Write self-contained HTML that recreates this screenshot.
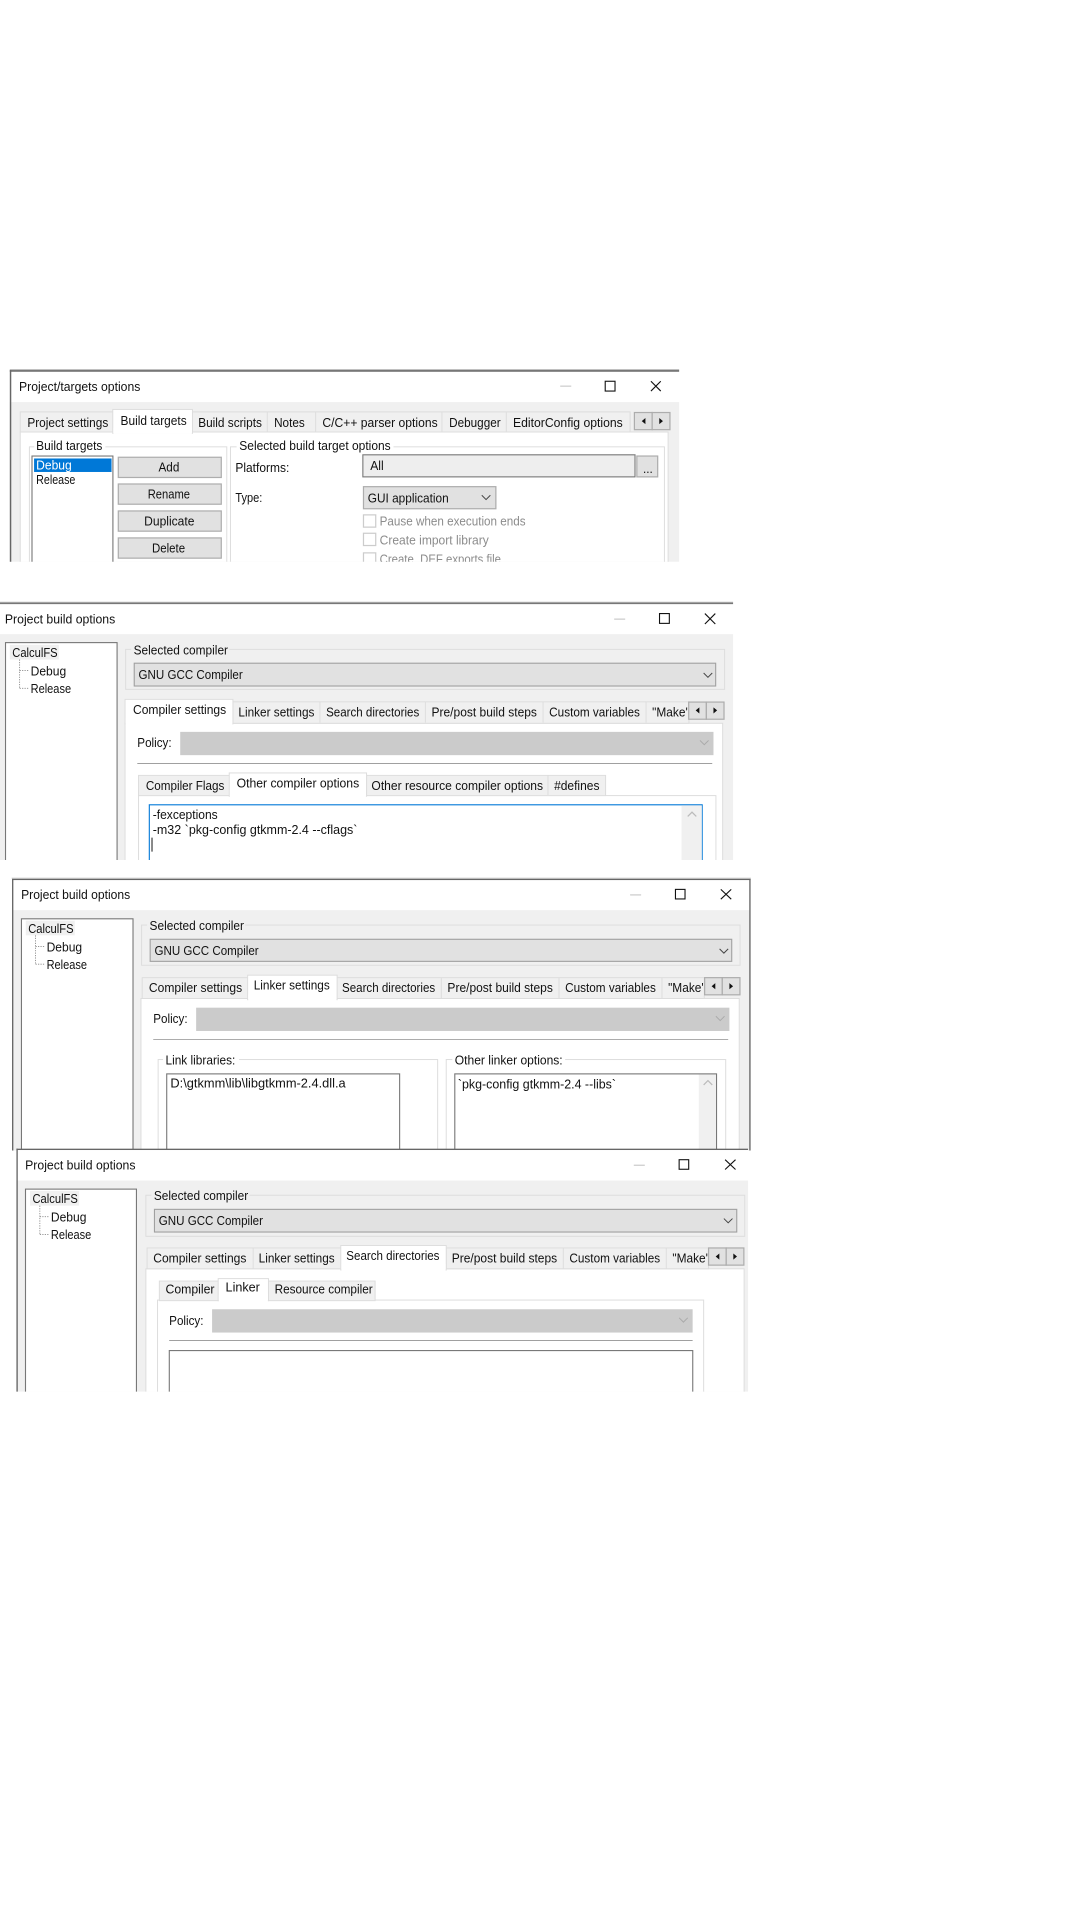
<!DOCTYPE html>
<html><head><meta charset="utf-8"><style>
html,body{margin:0;padding:0;background:#fff;width:1080px;height:1920px;overflow:hidden}
svg{display:block}
text{font-family:"Liberation Sans",sans-serif;font-size:10.4px;fill:#111}
.g{fill:#8c8c8c}
.w{fill:#fff}
</style></head><body>
<svg width="1080" height="1920" viewBox="0 0 881 1566.200" preserveAspectRatio="none" xmlns="http://www.w3.org/2000/svg">
<defs>
<clipPath id="c1"><rect x="0" y="290" width="886" height="168.200"/></clipPath>
<clipPath id="c2"><rect x="0" y="485" width="886" height="216.500"/></clipPath>
<clipPath id="c3"><rect x="0" y="710" width="886" height="228.500"/></clipPath>
<clipPath id="c4"><rect x="0" y="936" width="886" height="199.200"/></clipPath>
</defs>
<rect width="881" height="1567" fill="#fff"/>

<!-- WINDOW 1 -->
<g clip-path="url(#c1)"><g transform="translate(0,-1)">
<rect x="8" y="303" width="546" height="160" fill="#fff"/>
<rect x="8" y="329" width="546" height="140" fill="#f0f0f0"/>
<rect x="8" y="302" width="546" height="1" fill="#ccc"/>
<rect x="8" y="302.700" width="546" height="1.600" fill="#777"/>
<rect x="8" y="303" width="1.200" height="160" fill="#666"/>
<text x="15.500" y="320" textLength="99" lengthAdjust="spacingAndGlyphs">Project/targets options</text>
<path d="M457 316h9" stroke="#ccc" fill="none"/>
<rect x="493.700" y="312" width="8" height="8" fill="none" stroke="#111" stroke-width=".9"/>
<path d="M531 312l8 8M539 312l-8 8" stroke="#111" stroke-width=".9" fill="none"/>
<rect x="16.500" y="353.400" width="528.500" height="120" fill="#fff" stroke="#ddd" stroke-width=".8"/>
<rect x="16.500" y="337" width="497.500" height="16.400" fill="#f0f0f0" stroke="#ddd" stroke-width=".8"/>
<path d="M157 337v16M218 337v16M257.500 337v16M360.500 337v16M413 337v16" stroke="#ddd" stroke-width=".8"/>
<rect x="92" y="335" width="65" height="19.500" fill="#fff" stroke="#ddd" stroke-width=".8"/>
<rect x="92.500" y="350" width="64" height="5" fill="#fff"/>
<text x="22.300" y="349.500" textLength="66" lengthAdjust="spacingAndGlyphs">Project settings</text>
<text x="98.300" y="347.500" textLength="54" lengthAdjust="spacingAndGlyphs">Build targets</text>
<text x="161.700" y="349.500" textLength="52" lengthAdjust="spacingAndGlyphs">Build scripts</text>
<text x="223.600" y="349.500" textLength="25" lengthAdjust="spacingAndGlyphs">Notes</text>
<text x="263" y="349.500" textLength="94" lengthAdjust="spacingAndGlyphs">C/C++ parser options</text>
<text x="366.400" y="349.500" textLength="42" lengthAdjust="spacingAndGlyphs">Debugger</text>
<text x="418.500" y="349.500" textLength="89.500" lengthAdjust="spacingAndGlyphs">EditorConfig options</text>
<rect x="517.500" y="337.500" width="14.500" height="14" fill="#e1e1e1" stroke="#adadad"/>
<rect x="532" y="337.500" width="14.500" height="14" fill="#e1e1e1" stroke="#adadad"/>
<path d="M526.500 342v5l-3-2.500zM537.800 342v5l3-2.500z" fill="#111"/>
<rect x="24" y="365.500" width="161" height="110" fill="none" stroke="#ddd" stroke-width=".8"/>
<rect x="28" y="361" width="58" height="8" fill="#fff"/>
<text x="29.500" y="368.200" textLength="54" lengthAdjust="spacingAndGlyphs">Build targets</text>
<rect x="26.100" y="373" width="66" height="100" fill="#fff" stroke="#777" stroke-width=".9"/>
<rect x="27.800" y="375" width="63.200" height="11" fill="#0078d7"/>
<text x="29.500" y="384" textLength="29" lengthAdjust="spacingAndGlyphs" class="w">Debug</text>
<text x="29.500" y="396" textLength="32" lengthAdjust="spacingAndGlyphs">Release</text>
<rect x="96.500" y="374" width="84" height="16.500" fill="#e1e1e1" stroke="#adadad"/>
<rect x="96.500" y="395.800" width="84" height="16.500" fill="#e1e1e1" stroke="#adadad"/>
<rect x="96.500" y="417.800" width="84" height="16.500" fill="#e1e1e1" stroke="#adadad"/>
<rect x="96.500" y="439.800" width="84" height="16.500" fill="#e1e1e1" stroke="#adadad"/>
<text x="129.300" y="385.500" textLength="17" lengthAdjust="spacingAndGlyphs">Add</text>
<text x="120.500" y="407.500" textLength="34.500" lengthAdjust="spacingAndGlyphs">Rename</text>
<text x="117.600" y="429.500" textLength="41" lengthAdjust="spacingAndGlyphs">Duplicate</text>
<text x="124" y="451.500" textLength="27" lengthAdjust="spacingAndGlyphs">Delete</text>
<rect x="188" y="365.500" width="354" height="110" fill="none" stroke="#ddd" stroke-width=".8"/>
<rect x="193" y="361" width="128" height="8" fill="#fff"/>
<text x="195.200" y="368.200" textLength="123.500" lengthAdjust="spacingAndGlyphs">Selected build target options</text>
<text x="192" y="386" textLength="44" lengthAdjust="spacingAndGlyphs">Platforms:</text>
<rect x="296" y="372" width="222" height="18" fill="#eee" stroke="#777" stroke-width=".9"/>
<text x="302" y="384.500" textLength="11" lengthAdjust="spacingAndGlyphs">All</text>
<rect x="519.500" y="373" width="17" height="17" fill="#e1e1e1" stroke="#adadad"/>
<text x="524.500" y="387" textLength="8" lengthAdjust="spacingAndGlyphs">...</text>
<text x="192" y="410.500" textLength="22" lengthAdjust="spacingAndGlyphs">Type:</text>
<rect x="296.500" y="398" width="108" height="18" fill="#e1e1e1" stroke="#adadad"/>
<text x="300" y="411" textLength="66" lengthAdjust="spacingAndGlyphs">GUI application</text>
<path d="M393 405l3.500 3.500 3.500-3.500" stroke="#444" stroke-width=".8" fill="none"/>
<rect x="296.500" y="421" width="10" height="10" fill="#fff" stroke="#ccc"/>
<rect x="296.500" y="436" width="10" height="10" fill="#fff" stroke="#ccc"/>
<rect x="296.500" y="452" width="10" height="10" fill="#fff" stroke="#ccc"/>
<text x="309.700" y="429.500" textLength="119" lengthAdjust="spacingAndGlyphs" class="g">Pause when execution ends</text>
<text x="309.700" y="445" textLength="89" lengthAdjust="spacingAndGlyphs" class="g">Create import library</text>
<text x="309.700" y="460.500" textLength="99" lengthAdjust="spacingAndGlyphs" class="g">Create .DEF exports file</text>
</g></g>

<!-- WINDOW 2 -->
<g clip-path="url(#c2)">
<rect x="0" y="492" width="598" height="215" fill="#fff"/>
<rect x="0" y="517.300" width="598" height="190" fill="#f0f0f0"/>
<rect x="0" y="490.800" width="598" height="1" fill="#ccc"/>
<rect x="0" y="491.500" width="598" height="1.300" fill="#777"/>
<text x="4" y="508.700" textLength="90" lengthAdjust="spacingAndGlyphs">Project build options</text>
<path d="M501 505h9" stroke="#ccc" fill="none"/>
<rect x="538" y="500.500" width="8" height="8" fill="none" stroke="#111" stroke-width=".9"/>
<path d="M575 500.500l8.500 8.500M583.500 500.500l-8.500 8.500" stroke="#111" stroke-width=".9" fill="none"/>
<rect x="4.500" y="524.200" width="91" height="190" fill="#fff" stroke="#777" stroke-width=".9"/>
<rect x="8" y="526" width="40" height="12" fill="#f0f0f0"/>
<text x="10" y="536" textLength="37" lengthAdjust="spacingAndGlyphs">CalculFS</text>
<path d="M16 538v23M16 547h7M16 561.500h7" stroke="#888" stroke-width=".7" stroke-dasharray="1 1" fill="none"/>
<text x="25" y="551" textLength="29" lengthAdjust="spacingAndGlyphs">Debug</text>
<text x="25" y="565.500" textLength="33" lengthAdjust="spacingAndGlyphs">Release</text>
<rect x="102.500" y="529.700" width="488.600" height="32.600" fill="none" stroke="#ddd" stroke-width=".8"/>
<rect x="107" y="525" width="80" height="9" fill="#f0f0f0"/>
<text x="109" y="533.700" textLength="77" lengthAdjust="spacingAndGlyphs">Selected compiler</text>
<rect x="109.500" y="541" width="474.300" height="18.600" fill="#e1e1e1" stroke="#a0a0a0" stroke-width=".9"/>
<text x="113" y="554" textLength="85" lengthAdjust="spacingAndGlyphs">GNU GCC Compiler</text>
<path d="M574 549l3.500 3.500 3.500-3.500" stroke="#444" stroke-width=".8" fill="none"/>
<rect x="102" y="590" width="487.500" height="120" fill="#fff" stroke="#ddd" stroke-width=".8"/>
<rect x="190" y="572.500" width="372" height="17.500" fill="#f0f0f0" stroke="#ddd" stroke-width=".8"/>
<path d="M261 572.500v17M347 572.500v17M443 572.500v17M527 572.500v17" stroke="#ddd" stroke-width=".8"/>
<rect x="102" y="570.500" width="88" height="20" fill="#fff" stroke="#ddd" stroke-width=".8"/>
<rect x="102.500" y="586" width="87" height="6" fill="#fff"/>
<text x="108.500" y="582.300" textLength="76" lengthAdjust="spacingAndGlyphs">Compiler settings</text>
<text x="194.500" y="584.300" textLength="62" lengthAdjust="spacingAndGlyphs">Linker settings</text>
<text x="266" y="584.300" textLength="76" lengthAdjust="spacingAndGlyphs">Search directories</text>
<text x="352" y="584.300" textLength="86" lengthAdjust="spacingAndGlyphs">Pre/post build steps</text>
<text x="448" y="584.300" textLength="74" lengthAdjust="spacingAndGlyphs">Custom variables</text>
<text x="532" y="584.300" textLength="29" lengthAdjust="spacingAndGlyphs">"Make'</text>
<rect x="561.800" y="572.700" width="14.400" height="14" fill="#e1e1e1" stroke="#adadad"/>
<rect x="576.200" y="572.700" width="14.400" height="14" fill="#e1e1e1" stroke="#adadad"/>
<path d="M570.500 577v5l-3-2.500zM582 577v5l3-2.500z" fill="#111"/>
<text x="112" y="609.300" textLength="28" lengthAdjust="spacingAndGlyphs">Policy:</text>
<rect x="147" y="597" width="435" height="19" fill="#cbcbcb"/>
<path d="M571 604l3.500 3.500 3.500-3.500" stroke="#aaa" stroke-width=".8" fill="none"/>
<path d="M112 622.800h469" stroke="#a0a0a0" stroke-width=".8"/>
<rect x="113" y="649" width="471" height="60" fill="#fff" stroke="#ddd" stroke-width=".8"/>
<rect x="113" y="632.500" width="381" height="16.500" fill="#f0f0f0" stroke="#ddd" stroke-width=".8"/>
<path d="M299 632.500v16M447 632.500v16" stroke="#ddd" stroke-width=".8"/>
<rect x="187" y="630.500" width="112" height="19" fill="#fff" stroke="#ddd" stroke-width=".8"/>
<rect x="187.500" y="644.500" width="111" height="6" fill="#fff"/>
<text x="119" y="644.300" textLength="64" lengthAdjust="spacingAndGlyphs">Compiler Flags</text>
<text x="193" y="642.300" textLength="100" lengthAdjust="spacingAndGlyphs">Other compiler options</text>
<text x="303" y="644.300" textLength="140" lengthAdjust="spacingAndGlyphs">Other resource compiler options</text>
<text x="452" y="644.300" textLength="37" lengthAdjust="spacingAndGlyphs">#defines</text>
<rect x="121.800" y="656.500" width="451" height="60" fill="#fff" stroke="#0078d7" stroke-width=".9"/>
<rect x="556" y="657" width="16.500" height="50" fill="#f0f0f0"/>
<path d="M561 666l3.500-3.500 3.500 3.500" stroke="#bbb" stroke-width="1" fill="none"/>
<text x="124.600" y="668" textLength="53" lengthAdjust="spacingAndGlyphs">-fexceptions</text>
<text x="124.600" y="680.500" textLength="167" lengthAdjust="spacingAndGlyphs">-m32  `pkg-config gtkmm-2.4 --cflags`</text>
<path d="M124 683.300v11.400" stroke="#111" stroke-width=".8"/>
</g>

<!-- WINDOW 3 -->
<g clip-path="url(#c3)">
<rect x="10" y="717" width="602" height="225" fill="#fff"/>
<rect x="10" y="742.400" width="602" height="200" fill="#f0f0f0"/>
<rect x="9.500" y="715.800" width="603" height="1.300" fill="#ddd"/>
<rect x="9.800" y="716.800" width="602.500" height="1.100" fill="#666"/>
<rect x="9.800" y="717" width="1.100" height="225" fill="#666"/>
<rect x="611.200" y="717" width="1.100" height="225" fill="#666"/>
<text x="17.200" y="733.500" textLength="89" lengthAdjust="spacingAndGlyphs">Project build options</text>
<path d="M514 730h9" stroke="#ccc" fill="none"/>
<rect x="551" y="725.500" width="7.800" height="7.800" fill="none" stroke="#111" stroke-width=".9"/>
<path d="M588 725.500l8.500 8M596.500 725.500l-8.500 8" stroke="#111" stroke-width=".9" fill="none"/>
<rect x="17.500" y="749.500" width="91" height="200" fill="#fff" stroke="#777" stroke-width=".9"/>
<rect x="21" y="751" width="40" height="12" fill="#f0f0f0"/>
<text x="23" y="761" textLength="37" lengthAdjust="spacingAndGlyphs">CalculFS</text>
<path d="M29 763v23M29 772h7M29 786.500h7" stroke="#888" stroke-width=".7" stroke-dasharray="1 1" fill="none"/>
<text x="38" y="776" textLength="29" lengthAdjust="spacingAndGlyphs">Debug</text>
<text x="38" y="790.500" textLength="33" lengthAdjust="spacingAndGlyphs">Release</text>
<rect x="115.500" y="754.600" width="488.200" height="32.800" fill="none" stroke="#ddd" stroke-width=".8"/>
<rect x="120" y="750" width="80" height="9" fill="#f0f0f0"/>
<text x="122" y="758.700" textLength="77" lengthAdjust="spacingAndGlyphs">Selected compiler</text>
<rect x="122.500" y="766.200" width="474.400" height="18" fill="#e1e1e1" stroke="#a0a0a0" stroke-width=".9"/>
<text x="126" y="779.200" textLength="85" lengthAdjust="spacingAndGlyphs">GNU GCC Compiler</text>
<path d="M587 774l3.500 3.500 3.500-3.500" stroke="#444" stroke-width=".8" fill="none"/>
<rect x="115" y="814.500" width="488" height="130" fill="#fff" stroke="#ddd" stroke-width=".8"/>
<rect x="116" y="797.500" width="458.500" height="17" fill="#f0f0f0" stroke="#ddd" stroke-width=".8"/>
<path d="M274 797.500v17M360 797.500v17M456 797.500v17M540 797.500v17" stroke="#ddd" stroke-width=".8"/>
<rect x="202" y="795.500" width="73" height="20" fill="#fff" stroke="#ddd" stroke-width=".8"/>
<rect x="202.500" y="811" width="72" height="6" fill="#fff"/>
<text x="121.500" y="809.200" textLength="76" lengthAdjust="spacingAndGlyphs">Compiler settings</text>
<text x="207" y="807.200" textLength="62" lengthAdjust="spacingAndGlyphs">Linker settings</text>
<text x="279" y="809.200" textLength="76" lengthAdjust="spacingAndGlyphs">Search directories</text>
<text x="365" y="809.200" textLength="86" lengthAdjust="spacingAndGlyphs">Pre/post build steps</text>
<text x="461" y="809.200" textLength="74" lengthAdjust="spacingAndGlyphs">Custom variables</text>
<text x="545" y="809.200" textLength="29" lengthAdjust="spacingAndGlyphs">"Make'</text>
<rect x="574.800" y="797.500" width="14.400" height="14" fill="#e1e1e1" stroke="#adadad"/>
<rect x="589.200" y="797.500" width="14.400" height="14" fill="#e1e1e1" stroke="#adadad"/>
<path d="M583.500 802v5l-3-2.500zM595 802v5l3-2.500z" fill="#111"/>
<text x="125" y="834.500" textLength="28" lengthAdjust="spacingAndGlyphs">Policy:</text>
<rect x="160" y="822" width="435" height="19" fill="#cbcbcb"/>
<path d="M584 829l3.500 3.500 3.500-3.500" stroke="#aaa" stroke-width=".8" fill="none"/>
<path d="M125 848h469" stroke="#a0a0a0" stroke-width=".8"/>
<rect x="129" y="864.300" width="228" height="90" fill="none" stroke="#ddd" stroke-width=".8"/>
<rect x="133" y="860" width="62" height="8" fill="#fff"/>
<text x="135" y="868.300" textLength="57" lengthAdjust="spacingAndGlyphs">Link libraries:</text>
<rect x="364" y="864.300" width="228" height="90" fill="none" stroke="#ddd" stroke-width=".8"/>
<rect x="369" y="860" width="92" height="8" fill="#fff"/>
<text x="371" y="868.300" textLength="88" lengthAdjust="spacingAndGlyphs">Other linker options:</text>
<rect x="136" y="876" width="190" height="70" fill="#fff" stroke="#777" stroke-width=".9"/>
<text x="139" y="887" textLength="143" lengthAdjust="spacingAndGlyphs">D:\gtkmm\lib\libgtkmm-2.4.dll.a</text>
<rect x="371" y="876" width="213.500" height="70" fill="#fff" stroke="#777" stroke-width=".9"/>
<rect x="570" y="876.500" width="14" height="65" fill="#f0f0f0"/>
<path d="M574 885l3.500-3.500 3.500 3.500" stroke="#bbb" stroke-width="1" fill="none"/>
<text x="373.500" y="888" textLength="129" lengthAdjust="spacingAndGlyphs">`pkg-config gtkmm-2.4 --libs`</text>
</g>

<!-- WINDOW 4 -->
<g clip-path="url(#c4)"><g transform="translate(0,-1)">
<rect x="13.400" y="938.500" width="596.800" height="205" fill="#fff"/>
<rect x="13.400" y="964" width="596.800" height="180" fill="#f0f0f0"/>
<rect x="13.400" y="938" width="596.800" height="1.100" fill="#666"/>
<rect x="13.400" y="938" width="1.100" height="205" fill="#666"/>
<text x="20.500" y="955" textLength="90" lengthAdjust="spacingAndGlyphs">Project build options</text>
<path d="M517 951.500h9" stroke="#ccc" fill="none"/>
<rect x="554" y="947" width="7.800" height="7.800" fill="none" stroke="#111" stroke-width=".9"/>
<path d="M591.500 947l8.500 8M600 947l-8.500 8" stroke="#111" stroke-width=".9" fill="none"/>
<rect x="20.800" y="971" width="90.500" height="180" fill="#fff" stroke="#777" stroke-width=".9"/>
<rect x="24.500" y="972.500" width="40" height="12" fill="#f0f0f0"/>
<text x="26.500" y="982.300" textLength="37" lengthAdjust="spacingAndGlyphs">CalculFS</text>
<path d="M32.500 984.500v23M32.500 993.500h7M32.500 1008h7" stroke="#888" stroke-width=".7" stroke-dasharray="1 1" fill="none"/>
<text x="41.500" y="997.300" textLength="29" lengthAdjust="spacingAndGlyphs">Debug</text>
<text x="41.500" y="1011.800" textLength="33" lengthAdjust="spacingAndGlyphs">Release</text>
<rect x="119" y="976" width="488.500" height="33.500" fill="none" stroke="#ddd" stroke-width=".8"/>
<rect x="123.500" y="971" width="80" height="9" fill="#f0f0f0"/>
<text x="125.500" y="979.700" textLength="77" lengthAdjust="spacingAndGlyphs">Selected compiler</text>
<rect x="126" y="987.500" width="475" height="18.500" fill="#e1e1e1" stroke="#a0a0a0" stroke-width=".9"/>
<text x="129.500" y="1000.200" textLength="85" lengthAdjust="spacingAndGlyphs">GNU GCC Compiler</text>
<path d="M590.500 995l3.500 3.500 3.500-3.500" stroke="#444" stroke-width=".8" fill="none"/>
<rect x="119" y="1036" width="488" height="120" fill="#fff" stroke="#ddd" stroke-width=".8"/>
<rect x="120" y="1019" width="458" height="17" fill="#f0f0f0" stroke="#ddd" stroke-width=".8"/>
<path d="M206.500 1019v17M364 1019v17M459.500 1019v17M543.500 1019v17" stroke="#ddd" stroke-width=".8"/>
<rect x="278" y="1017" width="86" height="20" fill="#fff" stroke="#ddd" stroke-width=".8"/>
<rect x="278.500" y="1032" width="85" height="6" fill="#fff"/>
<text x="125" y="1031" textLength="76" lengthAdjust="spacingAndGlyphs">Compiler settings</text>
<text x="211" y="1031" textLength="62" lengthAdjust="spacingAndGlyphs">Linker settings</text>
<text x="282.500" y="1029" textLength="76" lengthAdjust="spacingAndGlyphs">Search directories</text>
<text x="368.500" y="1031" textLength="86" lengthAdjust="spacingAndGlyphs">Pre/post build steps</text>
<text x="464.500" y="1031" textLength="74" lengthAdjust="spacingAndGlyphs">Custom variables</text>
<text x="548.500" y="1031" textLength="29" lengthAdjust="spacingAndGlyphs">"Make'</text>
<rect x="578" y="1019" width="14.400" height="14" fill="#e1e1e1" stroke="#adadad"/>
<rect x="592.400" y="1019" width="14.400" height="14" fill="#e1e1e1" stroke="#adadad"/>
<path d="M586.800 1023.500v5l-3-2.500zM598.200 1023.500v5l3-2.500z" fill="#111"/>
<rect x="128.500" y="1061.500" width="445.500" height="90" fill="#fff" stroke="#ddd" stroke-width=".8"/>
<rect x="130" y="1046" width="176" height="16" fill="#f0f0f0" stroke="#ddd" stroke-width=".8"/>
<path d="M219 1046v16" stroke="#ddd" stroke-width=".8"/>
<rect x="178" y="1044" width="41" height="18" fill="#fff" stroke="#ddd" stroke-width=".8"/>
<rect x="178.500" y="1057" width="40" height="6" fill="#fff"/>
<text x="135" y="1056.200" textLength="40" lengthAdjust="spacingAndGlyphs">Compiler</text>
<text x="184" y="1054.700" textLength="28" lengthAdjust="spacingAndGlyphs">Linker</text>
<text x="224" y="1056.200" textLength="80" lengthAdjust="spacingAndGlyphs">Resource compiler</text>
<text x="138" y="1082" textLength="28" lengthAdjust="spacingAndGlyphs">Policy:</text>
<rect x="173" y="1069" width="392" height="19" fill="#cbcbcb"/>
<path d="M554 1076l3.500 3.500 3.500-3.500" stroke="#aaa" stroke-width=".8" fill="none"/>
<path d="M138 1094.500h427" stroke="#a0a0a0" stroke-width=".8"/>
<rect x="138.100" y="1102.700" width="427" height="60" fill="#fff" stroke="#777" stroke-width=".9"/>
</g></g>
</svg>
</body></html>
